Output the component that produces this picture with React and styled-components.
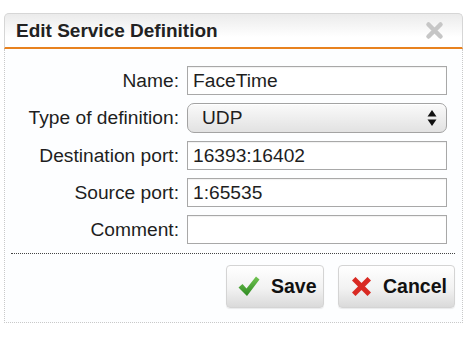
import React from "react";
import styled, { createGlobalStyle } from "styled-components";

const Global = createGlobalStyle`
  html, body { margin: 0; padding: 0; background: #ffffff; }
  body { font-family: "Liberation Sans", Arial, Helvetica, sans-serif; }
`;

const Dialog = styled.div`
  margin: 13px 0 0 4px;
  width: 459px;
  display: flex;
  flex-direction: column;
`;

const Header = styled.div`
  height: 33px;
  display: flex;
  align-items: center;
  justify-content: space-between;
  padding: 0 18px 0 11px;
  border: 1px solid #d6d6d6;
  border-radius: 5px 5px 0 0;
  background: linear-gradient(#ebebeb, #ffffff 70%);
  border-bottom: 2px solid #e8821f;
`;

const Title = styled.div`
  font-weight: bold;
  font-size: 19px;
  color: #222;
`;

const Close = styled.svg`
  width: 19px;
  height: 19px;
  display: block;
`;

const Body = styled.div`
  border: 1px dotted #c9c9c9;
  border-top: none;
  background: #fdfeff;
  padding: 17px 7px 14px 6px;
  display: flex;
  flex-direction: column;
`;

const Form = styled.div`
  display: grid;
  grid-template-columns: 168px 260px;
  column-gap: 8px;
  row-gap: 8px;
  align-items: center;
`;

const Label = styled.label`
  text-align: right;
  font-size: 19.2px;
  color: #1e1e1e;
`;

const Input = styled.div`
  height: 27px;
  border: 1px solid #a8a8a8;
  background: #fff;
  padding: 0 5px;
  display: flex;
  align-items: center;
  font-size: 19.2px;
  color: #1e1e1e;
  box-shadow: inset 0 1px 1px rgba(0,0,0,0.06);
`;

const Select = styled.div`
  height: 28px;
  border: 1px solid #a3a3a3;
  border-radius: 7px;
  background: linear-gradient(#fafafa, #e2e2e2);
  padding: 0 9px 0 14px;
  display: flex;
  align-items: center;
  justify-content: space-between;
  font-size: 19.2px;
  color: #1e1e1e;
  box-shadow: inset 0 1px 0 #fff;
`;

const Separator = styled.div`
  margin-top: 9px;
  border-top: 1px dotted #444;
`;

const Actions = styled.div`
  margin-top: 11px;
  display: flex;
  justify-content: flex-end;
  gap: 14px;
`;

const Button = styled.button`
  height: 43px;
  width: ${p => p.$w}px;
  border: 1px solid #d4d4d4;
  border-radius: 4px;
  background: linear-gradient(#ffffff, #f2f2f2 55%, #dadada);
  display: flex;
  align-items: center;
  gap: ${p => p.$gap}px;
  padding: 0 0 0 ${p => p.$pl}px;
  font-family: "Liberation Sans", Arial, Helvetica, sans-serif;
  font-weight: bold;
  font-size: 19.5px;
  color: #111;
  box-shadow: 0 1px 1px rgba(0,0,0,0.08);
`;

const Icon = styled.svg`
  display: block;
  flex: none;
`;

const Arrows = () => (
  <Icon width="10" height="18" viewBox="0 0 10 18">
    <path d="M5 1 L9.5 7.5 L0.5 7.5 Z" fill="#111" />
    <path d="M5 17 L9.5 10.5 L0.5 10.5 Z" fill="#111" />
  </Icon>
);

const Check = () => (
  <Icon width="22" height="21" viewBox="0 0 22 21">
    <defs>
      <linearGradient id="g" x1="0" y1="0" x2="0" y2="1">
        <stop offset="0" stopColor="#72c452" />
        <stop offset="1" stopColor="#2e8a22" />
      </linearGradient>
    </defs>
    <path d="M0.5 11.5 L4.5 8 L8.5 12.5 L18 0.5 L21.5 3.5 L9 20 Z" fill="url(#g)" />
  </Icon>
);

const Cross = () => (
  <Icon width="19" height="19" viewBox="0 0 19 19">
    <path d="M3.5 3.5 L15.5 15.5 M15.5 3.5 L3.5 15.5" stroke="#d92a23" strokeWidth="5" strokeLinecap="square" />
  </Icon>
);

export default function App() {
  return (
    <>
      <Global />
      <Dialog>
        <Header>
          <Title>Edit Service Definition</Title>
          <Close viewBox="0 0 19 19">
            <path d="M3.5 3.5 L15.5 15.5 M15.5 3.5 L3.5 15.5" stroke="#c6c6c6" strokeWidth="4.5" strokeLinecap="round" />
          </Close>
        </Header>
        <Body>
          <Form>
            <Label>Name:</Label>
            <Input>FaceTime</Input>
            <Label>Type of definition:</Label>
            <Select>
              <span>UDP</span>
              <Arrows />
            </Select>
            <Label>Destination port:</Label>
            <Input>16393:16402</Input>
            <Label>Source port:</Label>
            <Input>1:65535</Input>
            <Label>Comment:</Label>
            <Input />
          </Form>
          <Separator />
          <Actions>
            <Button $w={98} $pl={11} $gap={11}>
              <Check />
              Save
            </Button>
            <Button $w={117} $pl={13} $gap={12}>
              <Cross />
              Cancel
            </Button>
          </Actions>
        </Body>
      </Dialog>
    </>
  );
}
